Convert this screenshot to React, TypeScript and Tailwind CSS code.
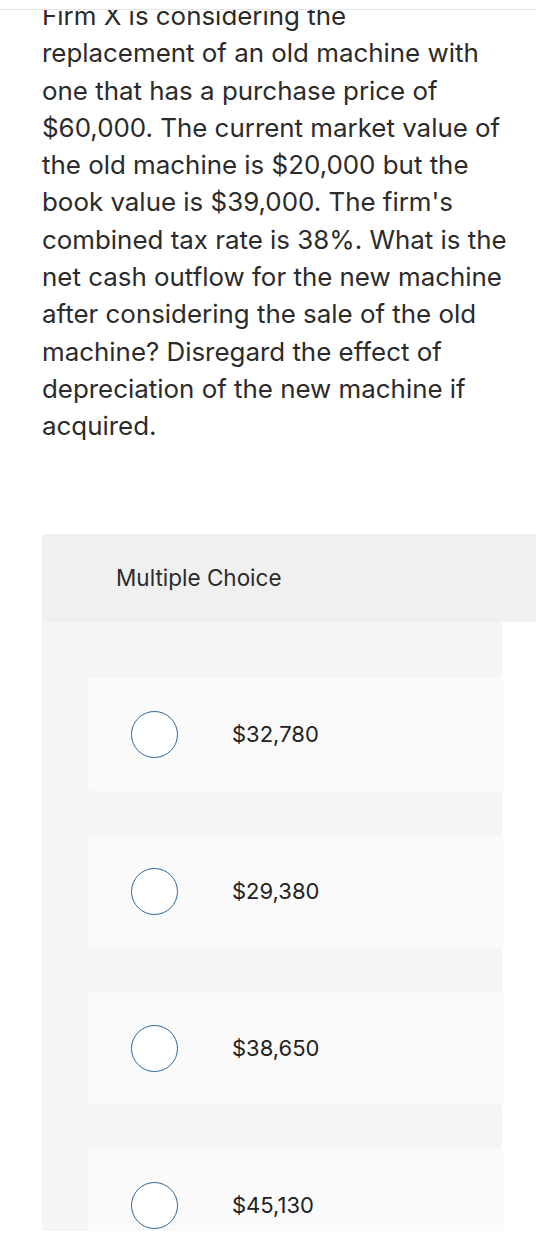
const lines = [
  "Firm X is considering the",
  "replacement of an old machine with",
  "one that has a purchase price of",
  "$60,000. The current market value of",
  "the old machine is $20,000 but the",
  "book value is $39,000. The firm's",
  "combined tax rate is 38%. What is the",
  "net cash outflow for the new machine",
  "after considering the sale of the old",
  "machine? Disregard the effect of",
  "depreciation of the new machine if",
  "acquired.",
];

const choices = ["$32,780", "$29,380", "$38,650", "$45,130"];

export default function App() {
  return (
    <div
      className="relative w-[536px] h-[1258px] overflow-hidden bg-white text-[#2b2b2b]"
      style={{ fontFamily: "Inter, 'Open Sans', sans-serif" }}
    >
      <div className="absolute top-0 left-0 right-0 h-[10px] bg-white border-b border-[#e6e6e6] z-10" />

      <p className="mt-[-3px] pl-[42px] text-[25.9px] leading-[37.3px]">
        {lines.map((l) => (
          <span key={l} className="block whitespace-nowrap">
            {l}
          </span>
        ))}
      </p>

      <div className="mt-[89px] ml-[42px]">
        <div className="h-[88px] bg-[#f0f0f0] rounded-tl-[4px] flex items-center pl-[74px] text-[22.5px] text-[#2b2b2b]">
          Multiple Choice
        </div>
        <div className="w-[460px] h-[609px] overflow-y-clip bg-[#f5f5f5] pt-[56px] flex flex-col gap-[44px]">
          {choices.map((c) => (
            <div
              key={c}
              className="ml-[46px] w-[416px] h-[113px] shrink-0 bg-[#fafafa] rounded-[4px] flex items-center"
            >
              <span className="ml-[43px] w-[47px] h-[47px] rounded-full border border-[#2f6699] bg-white shrink-0" />
              <span className="ml-[54px] text-[22px] text-[#222]">{c}</span>
            </div>
          ))}
        </div>
      </div>
    </div>
  );
}
